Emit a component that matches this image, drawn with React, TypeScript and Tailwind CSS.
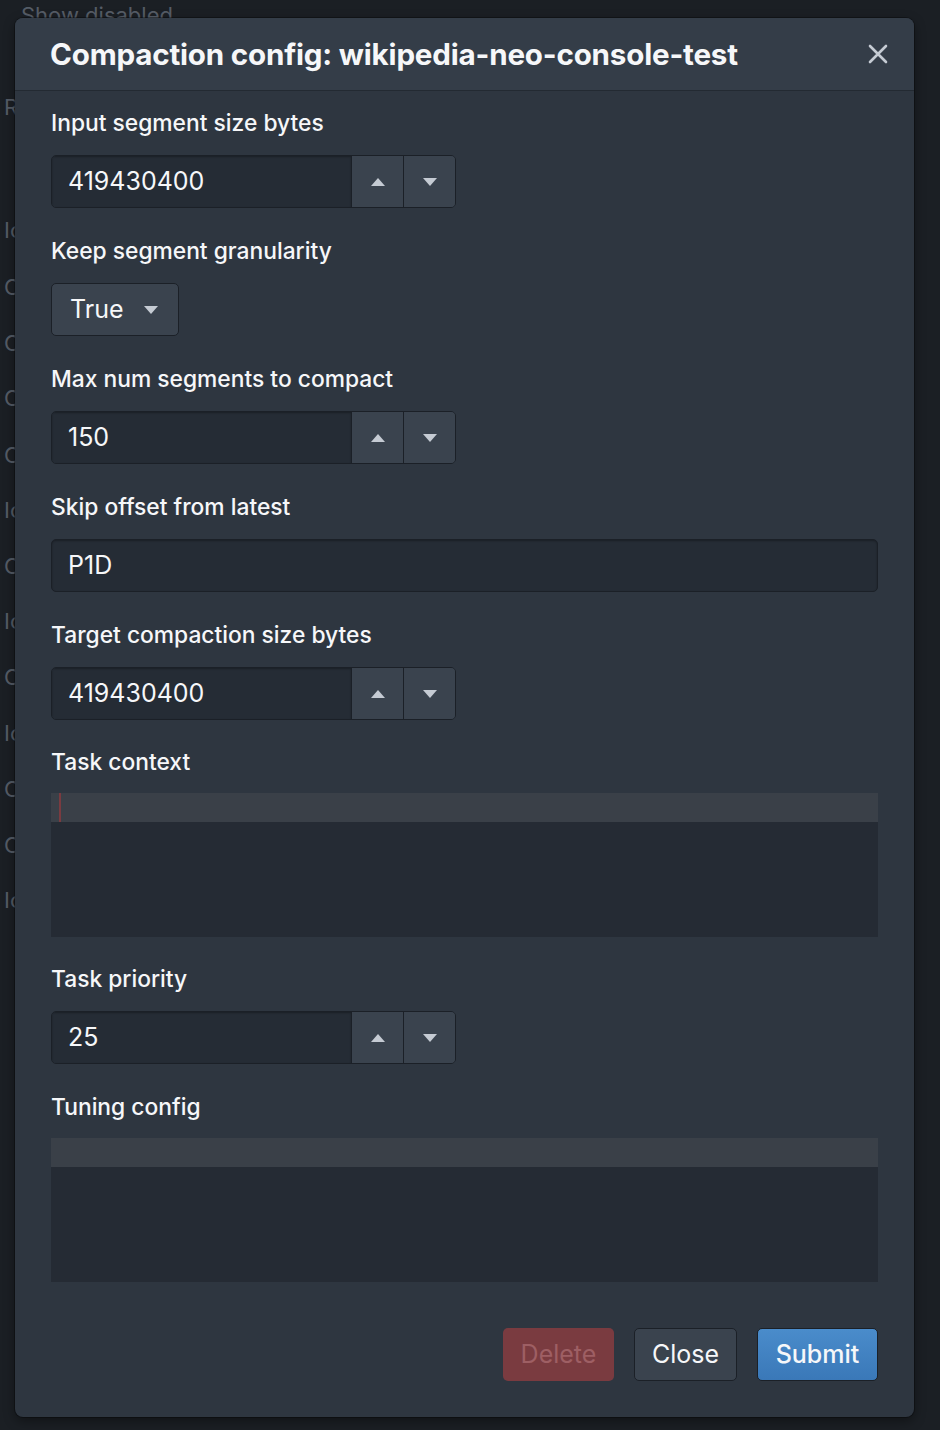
import React from "react";

const FONT = { fontFamily: "Inter, 'Liberation Sans', sans-serif" };

function Caret({ up }: { up?: boolean }) {
  return (
    <svg width="16" height="10" viewBox="0 0 16 10" className="text-[#c5cbd3]">
      {up ? (
        <path d="M1 9 L8 1 L15 9 Z" fill="currentColor" />
      ) : (
        <path d="M1 1 L8 9 L15 1 Z" fill="currentColor" />
      )}
    </svg>
  );
}

function Label({ children, tight }: { children: React.ReactNode; tight?: boolean }) {
  return (
    <div
      className={
        "text-[22.8px] leading-[28px] font-medium text-[#f6f7f9] " +
        (tight ? "mb-[17px]" : "mb-[18px]")
      }
    >
      {children}
    </div>
  );
}

function NumericInput({ value }: { value: string }) {
  return (
    <div className="flex w-[405px] h-[53px] rounded-[5px] border border-[#1b2027] overflow-hidden">
      <div className="flex-1 flex items-center pl-[16px] bg-[#252c35] text-[25px] text-[#f6f7f9] shadow-[inset_0_1px_2px_rgba(0,0,0,0.3)]">
        {value}
      </div>
      <div className="w-[52px] flex items-center justify-center bg-[#3a434e] border-l border-[#1b2027]">
        <Caret up />
      </div>
      <div className="w-[52px] flex items-center justify-center bg-[#3a434e] border-l border-[#1b2027]">
        <Caret />
      </div>
    </div>
  );
}

function Editor({ cursor }: { cursor?: boolean }) {
  return (
    <div className="h-[144px] bg-[#252b34] flex flex-col">
      <div className="h-[29px] bg-[#3a4048] flex items-stretch pl-[8px]">
        {cursor && <div className="w-[2px] bg-[#7a3b40]" />}
      </div>
    </div>
  );
}

function Field({
  label,
  children,
  gap = "mb-[29px]",
  tight,
}: {
  label: string;
  children: React.ReactNode;
  gap?: string;
  tight?: boolean;
}) {
  return (
    <div className={gap}>
      <Label tight={tight}>{label}</Label>
      {children}
    </div>
  );
}

export default function App() {
  const leftLetters = [
    ["R", 107],
    ["Ic", 230],
    ["C", 287],
    ["C", 343],
    ["C", 398],
    ["C", 455],
    ["Ic", 510],
    ["C", 566],
    ["Ic", 621],
    ["C", 677],
    ["Ic", 733],
    ["C", 789],
    ["C", 845],
    ["Ic", 900],
  ] as const;

  return (
    <div className="relative w-[940px] h-[1430px] overflow-hidden bg-[#1b1f24]" style={FONT}>
      {/* page behind the overlay */}
      <div className="text-[22px] leading-[28px] text-[#555c66] pl-[21px] pt-[1px]">Show disabled</div>
      {leftLetters.map(([t, y]) => (
        <div
          key={y}
          className="absolute left-[4px] text-[22px] leading-[28px] text-[#555c66]"
          style={{ top: y - 14 }}
        >
          {t}
        </div>
      ))}

      {/* dialog */}
      <div className="absolute left-[15px] top-[18px] w-[899px] h-[1399px] rounded-[8px] bg-[#2e3640] shadow-[0_0_0_1px_rgba(0,0,0,0.3),0_4px_12px_rgba(0,0,0,0.4)] flex flex-col">
        <div className="h-[73px] shrink-0 flex items-center justify-between pl-[35px] pr-[26px] bg-[#343d48] rounded-t-[8px] border-b border-[#232a32]">
          <div className="text-[29.6px] font-bold text-[#f6f7f9] tracking-[-0.2px]">
            Compaction config: wikipedia-neo-console-test
          </div>
          <svg width="20" height="20" viewBox="0 0 20 20">
            <path d="M2 2 L18 18 M18 2 L2 18" stroke="#c5cbd3" strokeWidth="2.6" strokeLinecap="round" />
          </svg>
        </div>

        <div className="flex-1 pl-[36px] pr-[36px] pt-[18px]">
          <Field label="Input segment size bytes">
            <NumericInput value="419430400" />
          </Field>

          <Field label="Keep segment granularity">
            <div className="w-[128px] h-[53px] flex items-center justify-between pl-[18px] pr-[19px] rounded-[5px] bg-[#3a434e] border border-[#1b2027] text-[25px] text-[#f6f7f9]">
              <span>True</span>
              <Caret />
            </div>
          </Field>

          <Field label="Max num segments to compact">
            <NumericInput value="150" />
          </Field>

          <Field label="Skip offset from latest">
            <div className="h-[53px] flex items-center pl-[16px] rounded-[5px] bg-[#252c35] border border-[#1b2027] shadow-[inset_0_1px_2px_rgba(0,0,0,0.3)] text-[25px] text-[#f6f7f9]">
              P1D
            </div>
          </Field>

          <Field label="Target compaction size bytes" gap="mb-[28px]">
            <NumericInput value="419430400" />
          </Field>

          <Field label="Task context" gap="mb-[28px]" tight>
            <Editor cursor />
          </Field>

          <Field label="Task priority">
            <NumericInput value="25" />
          </Field>

          <Field label="Tuning config" gap="mb-0" tight>
            <Editor />
          </Field>

          <div className="flex justify-end gap-[20px] mt-[46px]">
            <div className="w-[111px] h-[53px] flex items-center justify-center rounded-[5px] bg-[#7a3b40] text-[25px] text-[#9e5f64]">
              Delete
            </div>
            <div className="w-[103px] h-[53px] flex items-center justify-center rounded-[5px] bg-[#3a434e] border border-[#1b2027] text-[25px] text-[#f6f7f9]">
              Close
            </div>
            <div className="w-[121px] h-[53px] flex items-center justify-center rounded-[5px] bg-gradient-to-b from-[#4a8ccb] to-[#3a78b8] border border-[#1b2027] text-[25px] font-medium text-[#f6f7f9]">
              Submit
            </div>
          </div>
        </div>
      </div>
    </div>
  );
}
